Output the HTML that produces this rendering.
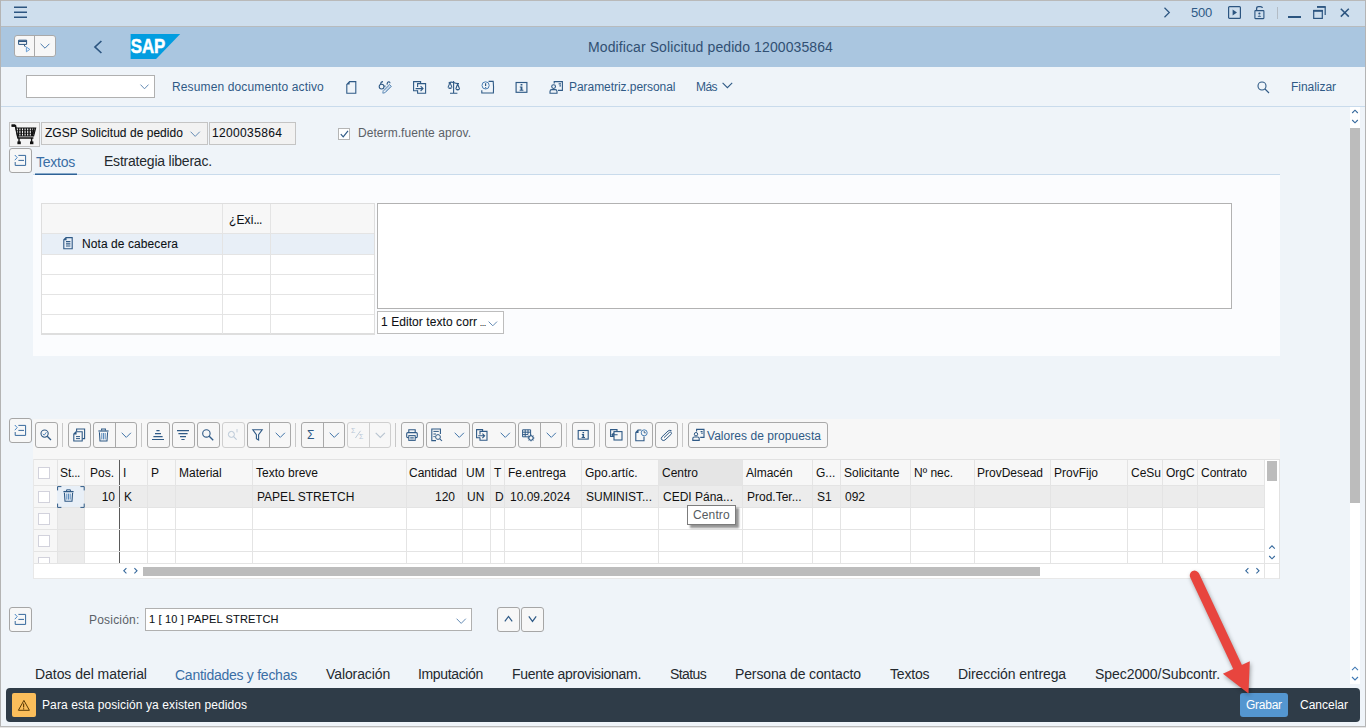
<!DOCTYPE html>
<html lang="es">
<head>
<meta charset="utf-8">
<title>Modificar Solicitud pedido 1200035864</title>
<style>
*{box-sizing:border-box;margin:0;padding:0}
html,body{width:1366px;height:728px;overflow:hidden;background:#eff4f9}
body{font-family:"Liberation Sans",sans-serif;font-size:13px;color:#24292e;position:relative}
.a{position:absolute}
.t{position:absolute;white-space:nowrap;line-height:16px;height:16px}
svg{position:absolute;overflow:visible}
#titlebar{left:0;top:0;width:1366px;height:26px;background:#cedeed}
#tsep{left:0;top:26px;width:1366px;height:1px;background:#b7bbbe}
#header{left:0;top:27px;width:1366px;height:40px;background:#aac6e0}
#toolbar{left:0;top:67px;width:1366px;height:39px;background:#eff4f9}
#tbline{left:0;top:106px;width:1366px;height:1px;background:#c9dbec}
.bl{color:#2f5a86}
.btn{position:absolute;background:#fafafa;border:1px solid #ababab;border-radius:3px}
.fld{position:absolute;background:#fff;border:1px solid #b3b3b3}
.ro{background:#f2f2f2;border-color:#c4c4c4}
.sep{position:absolute;width:1px;background:#c8c8c8}
.ic{stroke:#2f5a86;fill:none;stroke-width:1.1}
.f12{font-size:12px;letter-spacing:.13px}
.chev{stroke:#658cb5;fill:none;stroke-width:1}
.dk{color:#0d1116;-webkit-text-stroke:.08px #0d1116}
.tab{font-size:14px}
.cbtn{position:absolute;background:#f7f7f7;border:1px solid #a6a6a6;border-radius:3px}
.gl{position:absolute;background:#e4e4e4}
.g{font-size:12px;color:#111}
</style>
</head>
<body>
<!-- window chrome -->
<div class="a" id="titlebar"></div>
<div class="a" id="tsep"></div>
<div class="a" id="header"></div>
<div class="a" id="toolbar"></div>
<div class="a" id="tbline"></div>

<!-- title bar -->
<svg class="a" style="left:14px;top:5px" width="14" height="14" viewBox="0 0 14 14"><path d="M0 2.2H13M0 7.2H13M0 12.2H13" stroke="#2c5580" stroke-width="1.4" fill="none"/></svg>
<svg class="a" style="left:1163px;top:7px" width="8" height="11" viewBox="0 0 8 11"><path d="M1.5 0.8L6.3 5.5L1.5 10.2" stroke="#2c5580" stroke-width="1.2" fill="none"/></svg>
<div class="t bl" style="left:1191px;top:5px;font-size:13px;letter-spacing:-.2px">500</div>
<svg class="a" style="left:1228px;top:6px" width="13" height="13" viewBox="0 0 13 13"><rect x=".6" y=".6" width="11.8" height="11.8" rx="1" stroke="#2c5580" stroke-width="1.2" fill="none"/><path d="M4.6 3.6L9 6.5L4.6 9.4Z" fill="#2c5580"/></svg>
<svg class="a" style="left:1254px;top:5px" width="11" height="14" viewBox="0 0 11 14"><path d="M2.6 5.6V3.4Q2.6 1.6 4.6 1.6H6.4Q8.2 1.6 8.4 3" stroke="#2c5580" stroke-width="1.3" fill="none"/><rect x=".9" y="5.6" width="9" height="8" rx=".6" stroke="#2c5580" stroke-width="1.1" fill="none"/><path d="M5.4 7.4a1.1 1.1 0 1 1 0 2.2a1.1 1.1 0 1 1 0-2.2M3.6 11.8Q5.4 9.2 7.2 11.8Z" fill="#2c5580"/></svg>
<div class="a" style="left:1277px;top:7px;width:1px;height:12px;background:#b3bcc5"></div>
<div class="a" style="left:1288px;top:16px;width:13px;height:2px;background:#2c5580"></div>
<svg class="a" style="left:1313px;top:6px" width="13" height="13" viewBox="0 0 13 13"><path d="M4 1H12.2V9" stroke="#2c5580" stroke-width="1.2" fill="none"/><path d="M4 .9H12.6" stroke="#2c5580" stroke-width="1.7"/><rect x=".7" y="4.6" width="8.6" height="7.8" stroke="#2c5580" stroke-width="1.2" fill="none"/><path d="M.2 4.8H9.8" stroke="#2c5580" stroke-width="1.9"/></svg>
<svg class="a" style="left:1340px;top:8px" width="10" height="10" viewBox="0 0 10 10"><path d="M.8 .8L8.8 8.6M8.8 .8L.8 8.6" stroke="#2c5580" stroke-width="1.5" fill="none"/></svg>

<!-- header -->
<div class="btn" style="left:14px;top:35px;width:42px;height:22px;border-color:#a9a9a9;background:#f7f7f7"></div>
<div class="a" style="left:34px;top:36px;width:1px;height:20px;background:#a9a9a9"></div>
<svg class="a" style="left:18px;top:39px" width="13" height="14" viewBox="0 0 13 14"><path d="M.6 1.2H8.6V5.4H.6Z" stroke="#2c5580" stroke-width="1" fill="none"/><path d="M.6 2.3H8.6" stroke="#2c5580" stroke-width="1.5"/><path d="M6 5.6L7.4 8" stroke="#2c5580" stroke-width="1"/><path d="M8.4 8L11.8 10.4L8.4 12.8Z" stroke="#5a95d0" stroke-width=".9" fill="#eef4fb"/></svg>
<svg class="a" style="left:40px;top:43px" width="10" height="7" viewBox="0 0 10 7"><path d="M.6 .8L5 5.2L9.4 .8" stroke="#3f73a8" stroke-width=".95" fill="none"/></svg>
<svg class="a" style="left:93px;top:40px" width="10" height="14" viewBox="0 0 10 14"><path d="M8.4 1L2 7L8.4 13" stroke="#2c5580" stroke-width="1.7" fill="none"/></svg>
<svg class="a" style="left:130px;top:34px" width="51" height="25" viewBox="0 0 51 25"><path d="M.6 0H50.2L26.1 25H.6Z" fill="#029de0"/><text x=".7" y="18.8" font-family="Liberation Sans,sans-serif" font-weight="bold" font-size="20.4" fill="#fff" stroke="#fff" stroke-width=".5" textLength="34.6" lengthAdjust="spacingAndGlyphs">SAP</text></svg>
<div class="t" style="left:588px;top:39px;font-size:14px;letter-spacing:.1px;color:#315073">Modificar Solicitud pedido 1200035864</div>

<!-- toolbar -->
<div class="fld" style="left:26px;top:75px;width:129px;height:23px;border-color:#b0b0b0"></div>
<svg style="left:140px;top:84px" width="9" height="6" viewBox="0 0 9 6"><path class="chev" d="M.5 .6L4.5 4.8L8.5 .6"/></svg>
<div class="t bl f12" style="left:172px;top:79px">Resumen documento activo</div>
<svg style="left:346px;top:81px" width="11" height="13" viewBox="0 0 11 13"><path class="ic" d="M3.6 .6H9.8V12.2H.8V3.4Z"/><path d="M.8 3.4L3.6 .6V3.4Z" fill="#2f5a86"/></svg>
<svg style="left:378px;top:80px" width="15" height="14" viewBox="0 0 15 14"><circle class="ic" cx="3.6" cy="6.6" r="2.4" stroke-width="1"/><path class="ic" stroke-width=".9" d="M2.6 4.4Q2.8 1.6 5 1.6M6 6.4Q6.8 5.8 7.6 6.2M9 4.6Q9.4 1.6 11 1.8Q12 2.2 12 3.2"/><path d="M11.4 4.4L13.4 6.4L7.2 12.6L4.8 13.2L5.2 10.6Z" stroke="#3f73a8" stroke-width=".8" fill="none"/><path d="M6.4 10.8L11.8 5.4M7.4 11.6L12.6 6.2" stroke="#6f9ac6" stroke-width=".7"/></svg>
<svg style="left:413px;top:81px" width="14" height="13" viewBox="0 0 14 13"><path class="ic" d="M4.6 9.8H.6V.6H7.6V2.4"/><path class="ic" d="M4.6 6V2.6H12.6V12.2H4.6V9.2"/><path class="ic" d="M2.6 7.6H10M7.6 5.2L10 7.6L7.6 10"/></svg>
<svg style="left:447px;top:80px" width="14" height="14" viewBox="0 0 14 14"><path class="ic" stroke-width="1.3" d="M6.6 1V13M3 13.2H10.4"/><path class="ic" stroke-width="1" d="M1.6 3.2Q4 1.4 6.6 2.6Q9 3.8 12 3.6"/><path class="ic" stroke-width=".9" d="M3 2.6L1 7.4M3 2.6L5 7.4M10.6 4L8.8 9M10.6 4L12.6 9"/><path d="M.6 7.4H5.4Q3 10.4 .6 7.4ZM8.4 9H13Q10.6 12 8.4 9Z" fill="#2f5a86"/></svg>
<svg style="left:480px;top:80px" width="15" height="14" viewBox="0 0 15 14"><circle cx="5.6" cy="5.4" r="3.6" stroke="#4a7fb5" stroke-width="1" fill="none"/><path d="M5.6 3.2V6M5.6 7.2V8.2" stroke="#2f5a86" stroke-width="1.2"/><path class="ic" d="M8.6 1.4H13.2Q13.8 7 13.4 13H1.8V10.2"/></svg>
<svg style="left:515px;top:81px" width="13" height="12" viewBox="0 0 13 12"><rect x="1.1" y="1.5" width="10.8" height="9.8" stroke="#2f5a86" stroke-width="1.15" fill="none"/><path d="M5.6 3H7.4V4.6H5.6ZM4.8 5.5H7.4V8.8H8.4V9.8H4.6V8.8H5.6V6.5H4.8Z" fill="#2f5a86"/></svg>
<svg style="left:549px;top:80px" width="15" height="14" viewBox="0 0 15 14"><path class="ic" d="M5.2 3.6V1.6H13.4V10.4H9"/><path d="M9.6 3.8H12M10.4 5.8H12" stroke="#2f5a86" stroke-width="1.2"/><circle class="ic" cx="4.6" cy="6.6" r="1.9" stroke-width="1.1"/><path class="ic" stroke-width="1.1" d="M1 13.2V11.4Q1 9.6 2.8 9.6H6.2Q8 9.6 8 11.4V13.2Z"/></svg>
<div class="t bl f12" style="left:569px;top:79px;letter-spacing:-0.05px">Parametriz.personal</div>
<div class="t bl f12" style="left:696px;top:79px;letter-spacing:-0.55px">Más</div>
<svg style="left:722px;top:82px" width="11" height="7" viewBox="0 0 11 7"><path class="ic" stroke-width="1.1" d="M.6 .8L5.4 5.6L10.2 .8"/></svg>
<svg style="left:1257px;top:81px" width="13" height="13" viewBox="0 0 13 13"><circle class="ic" cx="5" cy="5" r="4" stroke-width="1.2"/><path class="ic" stroke-width="1.5" d="M8 8L12 12"/></svg>
<div class="t bl f12" style="left:1291px;top:79px;letter-spacing:-0.04px">Finalizar</div>

<!-- doc header row -->
<div class="a" style="left:9px;top:122px;width:31px;height:25px;background:#f4f4f4;border:1px solid #c2c2c2"></div>
<svg style="left:11px;top:124px" width="26" height="21" viewBox="0 0 26 21"><path d="M1 1.6H4.4L7 14H22.4" stroke="#111" stroke-width="1.6" fill="none"/><path d="M5 4H24.6L22.6 12H6.6Z" fill="#fff" stroke="#111" stroke-width="1.2"/><path d="M7.6 4V12M10.2 4V12M12.8 4V12M15.4 4V12M18 4V12M20.6 4V12M23 4L21.4 12" stroke="#111" stroke-width="1.5"/><path d="M5.6 6.6H24M6.2 9.4H23.4" stroke="#111" stroke-width=".7"/><rect x=".4" y=".4" width="3.6" height="2.4" fill="#111"/><path d="M8 14V18.4M20.6 14V18.4" stroke="#111" stroke-width="1.4"/><rect x="6.4" y="17.4" width="3.4" height="2.8" fill="#111"/><rect x="19" y="17.4" width="3.4" height="2.8" fill="#111"/></svg>
<div class="fld ro" style="left:41px;top:122px;width:167px;height:23px"></div>
<div class="t dk f12" style="left:45px;top:125px;letter-spacing:0.03px">ZGSP Solicitud de pedido</div>
<svg style="left:190px;top:131px" width="11" height="7" viewBox="0 0 11 7"><path class="chev" d="M.6 .7L5.2 5.4L9.8 .7"/></svg>
<div class="fld ro" style="left:209px;top:122px;width:87px;height:23px"></div>
<div class="t dk f12" style="left:212px;top:125px;letter-spacing:.35px">1200035864</div>
<div class="a" style="left:338px;top:128px;width:12px;height:12px;background:#fff;border:1px solid #b5b5b5"></div>
<svg style="left:340px;top:130px" width="9" height="8" viewBox="0 0 9 8"><path d="M.8 4.2L3.2 6.8L8 .8" stroke="#2f5a86" stroke-width="1.2" fill="none"/></svg>
<div class="t f12" style="left:358px;top:125px;color:#5b6167;letter-spacing:0.06px">Determ.fuente aprov.</div>
<!-- header tabs -->
<div class="cbtn" style="left:9px;top:148px;width:23px;height:25px"></div>
<svg style="left:14px;top:154px" width="13" height="12" viewBox="0 0 13 12"><path d="M.8 1L3.2 3.6L.8 6.2" stroke="#4a86c4" stroke-width="1" fill="none"/><path d="M4.4 1.4H11.6V11.4H1.2V8M4.4 6.4H10" stroke="#37699c" stroke-width="1" fill="none"/></svg>
<div class="t tab" style="left:36px;top:154px;color:#3a6ea5;letter-spacing:-.24px">Textos</div>
<div class="t tab" style="left:104px;top:153px;color:#24292e;letter-spacing:-.22px">Estrategia liberac.</div>
<div class="a" style="left:33px;top:174px;width:1247px;height:1px;background:#c9dbec"></div>
<div class="a" style="left:35px;top:173px;width:42px;height:1px;background:#86a8c9"></div><div class="a" style="left:35px;top:174px;width:42px;height:1px;background:#2f6296"></div>
<div class="a" style="left:33px;top:175px;width:1247px;height:181px;background:#fbfcfe"></div>

<!-- text panel -->
<div class="a" style="left:41px;top:203px;width:334px;height:132px;background:#fff;border:1px solid #dedede;border-bottom:2px solid #dedede"></div>
<div class="a" style="left:42px;top:204px;width:332px;height:29px;background:#f7f7f7"></div>
<div class="a" style="left:42px;top:234px;width:332px;height:20px;background:#e8eff7"></div>
<div class="gl" style="left:42px;top:233px;width:332px;height:1px"></div>
<div class="gl" style="left:42px;top:254px;width:332px;height:1px"></div>
<div class="gl" style="left:42px;top:274px;width:332px;height:1px"></div>
<div class="gl" style="left:42px;top:294px;width:332px;height:1px"></div>
<div class="gl" style="left:42px;top:314px;width:332px;height:1px"></div>
<div class="gl" style="left:222px;top:204px;width:1px;height:130px"></div>
<div class="gl" style="left:270px;top:204px;width:1px;height:130px"></div>
<div class="t dk f12" style="left:229px;top:212px">¿Exi<span style="letter-spacing:-.6px">...</span></div>
<svg style="left:63px;top:237px" width="10" height="13" viewBox="0 0 10 13"><path class="ic" stroke-width="1" d="M3 .6H9.2V11.8H.8V2.8ZM3 .6V2.8H.8"/><path d="M3 4.6H7.4M3 6.8H7.4M3 9H7.4" stroke="#2f5a86" stroke-width="1.2"/></svg>
<div class="t dk f12" style="left:82px;top:236px;letter-spacing:0.08px">Nota de cabecera</div>
<div class="fld" style="left:377px;top:203px;width:855px;height:106px;border-color:#b2b2b2"></div>
<div class="fld" style="left:377px;top:311px;width:127px;height:23px;border-color:#bdbdbd"></div>
<div class="t dk f12" style="left:381px;top:314px;letter-spacing:.07px">1 Editor texto corr<span style="letter-spacing:-.5px;font-size:9px;margin-left:2.6px">...</span></div>
<svg style="left:488px;top:321px" width="10" height="6" viewBox="0 0 10 6"><path class="chev" d="M.6 .6L4.8 4.8L9 .6"/></svg>

<!--ALVSTART-->
<!-- ALV grid -->
<div class="cbtn" style="left:9px;top:418px;width:23px;height:25px"></div>
<svg style="left:14px;top:424px" width="13" height="12" viewBox="0 0 13 12"><path d="M.8 1L3.2 3.6L.8 6.2" stroke="#4a86c4" stroke-width="1" fill="none"/><path d="M4.4 1.4H11.6V11.4H1.2V8M4.4 6.4H10" stroke="#37699c" stroke-width="1" fill="none"/></svg>
<div class="a" style="left:33px;top:419px;width:1247px;height:40px;background:#f7f7f7"></div>
<div class="cbtn" style="left:35px;top:422px;width:23px;height:26px;border-color:#a9a9a9"></div>
<div class="cbtn" style="left:68px;top:422px;width:23px;height:26px;border-color:#a9a9a9"></div>
<div class="cbtn" style="left:93px;top:422px;width:44px;height:26px;border-color:#a9a9a9"></div>
<div class="a" style="left:115px;top:423px;width:1px;height:24px;background:#a9a9a9"></div>
<div class="cbtn" style="left:147px;top:422px;width:23px;height:26px;border-color:#a9a9a9"></div>
<div class="cbtn" style="left:172px;top:422px;width:23px;height:26px;border-color:#a9a9a9"></div>
<div class="cbtn" style="left:197px;top:422px;width:23px;height:26px;border-color:#a9a9a9"></div>
<div class="cbtn" style="left:222px;top:422px;width:23px;height:26px;border-color:#cfcfcf"></div>
<div class="cbtn" style="left:247px;top:422px;width:44px;height:26px;border-color:#a9a9a9"></div>
<div class="a" style="left:269px;top:423px;width:1px;height:24px;background:#a9a9a9"></div>
<div class="cbtn" style="left:301px;top:422px;width:44px;height:26px;border-color:#a9a9a9"></div>
<div class="a" style="left:323px;top:423px;width:1px;height:24px;background:#a9a9a9"></div>
<div class="cbtn" style="left:347px;top:422px;width:44px;height:26px;border-color:#cfcfcf"></div>
<div class="a" style="left:369px;top:423px;width:1px;height:24px;background:#cfcfcf"></div>
<div class="cbtn" style="left:401px;top:422px;width:23px;height:26px;border-color:#a9a9a9"></div>
<div class="cbtn" style="left:426px;top:422px;width:44px;height:26px;border-color:#a9a9a9"></div>
<div class="cbtn" style="left:472px;top:422px;width:44px;height:26px;border-color:#a9a9a9"></div>
<div class="cbtn" style="left:518px;top:422px;width:44px;height:26px;border-color:#a9a9a9"></div>
<div class="a" style="left:540px;top:423px;width:1px;height:24px;background:#a9a9a9"></div>
<div class="cbtn" style="left:572px;top:422px;width:23px;height:26px;border-color:#a9a9a9"></div>
<div class="cbtn" style="left:605px;top:422px;width:23px;height:26px;border-color:#a9a9a9"></div>
<div class="cbtn" style="left:630px;top:422px;width:23px;height:26px;border-color:#a9a9a9"></div>
<div class="cbtn" style="left:655px;top:422px;width:23px;height:26px;border-color:#a9a9a9"></div>
<div class="cbtn" style="left:688px;top:422px;width:140px;height:26px;border-color:#a9a9a9"></div>
<div class="sep" style="left:62px;top:423px;height:24px"></div>
<div class="sep" style="left:141px;top:423px;height:24px"></div>
<div class="sep" style="left:295px;top:423px;height:24px"></div>
<div class="sep" style="left:395px;top:423px;height:24px"></div>
<div class="sep" style="left:566px;top:423px;height:24px"></div>
<div class="sep" style="left:599px;top:423px;height:24px"></div>
<div class="sep" style="left:682px;top:423px;height:24px"></div>
<svg style="left:121px;top:432px" width="11" height="7" viewBox="0 0 11 7"><path d="M.7 .8L5.3 5.4L9.9 .8" stroke="#3f73a8" stroke-width="1" fill="none"/></svg>
<svg style="left:275px;top:432px" width="11" height="7" viewBox="0 0 11 7"><path d="M.7 .8L5.3 5.4L9.9 .8" stroke="#3f73a8" stroke-width="1" fill="none"/></svg>
<svg style="left:329px;top:432px" width="11" height="7" viewBox="0 0 11 7"><path d="M.7 .8L5.3 5.4L9.9 .8" stroke="#3f73a8" stroke-width="1" fill="none"/></svg>
<svg style="left:375px;top:432px" width="11" height="7" viewBox="0 0 11 7"><path d="M.7 .8L5.3 5.4L9.9 .8" stroke="#b8c4d0" stroke-width="1.1" fill="none"/></svg>
<svg style="left:454px;top:432px" width="11" height="7" viewBox="0 0 11 7"><path d="M.7 .8L5.3 5.4L9.9 .8" stroke="#3f73a8" stroke-width="1" fill="none"/></svg>
<svg style="left:500px;top:432px" width="11" height="7" viewBox="0 0 11 7"><path d="M.7 .8L5.3 5.4L9.9 .8" stroke="#3f73a8" stroke-width="1" fill="none"/></svg>
<svg style="left:546px;top:432px" width="11" height="7" viewBox="0 0 11 7"><path d="M.7 .8L5.3 5.4L9.9 .8" stroke="#3f73a8" stroke-width="1" fill="none"/></svg>
<svg style="left:40px;top:429px" width="12" height="12" viewBox="0 0 12 12"><circle cx="4.6" cy="4.6" r="3.6" stroke="#2f5a86" stroke-width="1.1" fill="none"/><path d="M7.2 7.2L11 11" stroke="#2f5a86" stroke-width="1.3"/><path d="M2.8 4.8L4.2 6.2L6.4 3.2" stroke="#4a7fb5" stroke-width=".9" fill="none"/></svg>
<svg style="left:73px;top:428px" width="13" height="14" viewBox="0 0 13 14"><path class="ic" stroke-width="1.1" d="M3.6 3.6V1H11.6V10.6H9.4"/><path class="ic" stroke-width="1.1" d="M3 3.8H9.2V13H.8V6ZM3 3.8V6H.8"/><path d="M3 8.6H7M3 10.6H7" stroke="#2f5a86" stroke-width="1"/></svg>
<svg style="left:98px;top:428px" width="11" height="14" viewBox="0 0 11 14"><path d="M.4 3H10.6" stroke="#2f5a86" stroke-width="1.2"/><path d="M3.6 2.4V1H7.4V2.4" stroke="#2f5a86" stroke-width="1.1" fill="none"/><path d="M1.4 4.2L2 13H9L9.6 4.2" stroke="#2f5a86" stroke-width="1.05" fill="none"/><path d="M3.8 5V11.4M5.5 5V11.4M7.2 5V11.4" stroke="#4a7fb5" stroke-width=".9"/></svg>
<svg style="left:151px;top:429px" width="14" height="12" viewBox="0 0 14 12"><path d="M5.4 1.6H8.6M4 4.6H10M2.4 7.6H11.6M1 10.4H13" stroke="#2f5a86" stroke-width="1.05"/></svg>
<svg style="left:176px;top:429px" width="14" height="12" viewBox="0 0 14 12"><path d="M1 1.6H13M2.4 4.6H11.6M4 7.6H10M5.4 10.4H8.6" stroke="#2f5a86" stroke-width="1.05"/></svg>
<svg style="left:201px;top:428px" width="14" height="14" viewBox="0 0 14 14"><circle cx="5.4" cy="5.4" r="3.7" stroke="#2f5a86" stroke-width="1.1" fill="none"/><path d="M8.2 8.2L12.2 12.2" stroke="#2f5a86" stroke-width="1.3"/></svg>
<svg style="left:227px;top:428px" width="13" height="13" viewBox="0 0 13 13"><circle cx="4.4" cy="6.4" r="3" stroke="#b8c7d6" stroke-width="1" fill="none"/><path d="M6.6 8.6L9.6 11.6" stroke="#b8c7d6" stroke-width="1.05"/><path d="M10 1V4.4" stroke="#c5d0dc" stroke-width="1"/></svg>
<svg style="left:252px;top:429px" width="11" height="12" viewBox="0 0 11 12"><path d="M.8 .8H10.2L6.6 5.8V11L4.4 9.6V5.8Z" stroke="#2f5a86" stroke-width="1.1" fill="none"/></svg>
<div class="t" style="left:307px;top:427px;font-size:12px;color:#2f5a86">&Sigma;</div>
<div class="t" style="left:351px;top:423px;font-size:7px;color:#b8c7d6">&Sigma;</div><div class="t" style="left:359px;top:429px;font-size:7px;color:#b8c7d6">&Sigma;</div>
<svg style="left:354px;top:430px" width="8" height="9" viewBox="0 0 8 9"><path d="M6.6 .8L1.4 8" stroke="#b8c7d6" stroke-width=".9"/></svg>
<svg style="left:406px;top:429px" width="12" height="12" viewBox="0 0 12 12"><path class="ic" stroke-width="1" d="M2.8 3.6V.8H9.2V3.6"/><rect x=".7" y="3.6" width="10.6" height="5" rx="1.1" stroke="#2f5a86" stroke-width="1.1" fill="none"/><rect x="2.8" y="6.6" width="6.4" height="4.8" stroke="#2f5a86" stroke-width="1" fill="#f7f7f7"/><path d="M4.2 8.4H7.8M4.2 9.9H7.8" stroke="#2f5a86" stroke-width=".8"/></svg>
<svg style="left:431px;top:428px" width="12" height="14" viewBox="0 0 12 14"><path class="ic" stroke-width="1.1" d="M9.4 6V1H.8V12.6H5"/><path d="M2.4 3.4H7.8M2.4 6H5" stroke="#2f5a86" stroke-width="1"/><circle cx="7" cy="9" r="2.4" stroke="#2f5a86" stroke-width="1" fill="none"/><path d="M8.8 10.8L11 13" stroke="#2f5a86" stroke-width="1.05"/><path d="M2.4 8.6H3.8" stroke="#2f5a86" stroke-width="1"/></svg>
<svg style="left:476px;top:429px" width="12" height="12" viewBox="0 0 12 12"><path class="ic" stroke-width="1.1" d="M4 8.8H.6V.6H6.6V2.2"/><path class="ic" stroke-width="1.1" d="M4 5.4V2.4H11V11.2H4V8.4"/><path class="ic" stroke-width="1.1" d="M2.2 6.8H8.6M6.4 4.6L8.6 6.8L6.4 9"/></svg>
<svg style="left:522px;top:429px" width="13" height="13" viewBox="0 0 13 13"><path d="M.6 .8H8.6V7.8H.6ZM.6 3.2H8.6M.6 5.6H6M3.2 .8V7.8M6 .8V5.4" stroke="#2f5a86" stroke-width="1" fill="none"/><circle cx="9" cy="9" r="2.2" stroke="#2f5a86" stroke-width="1.1" fill="#f7f7f7"/><path d="M9 5.6V6.8M9 11.2V12.4M5.6 9H6.8M11.2 9H12.4M6.6 6.6L7.4 7.4M10.6 10.6L11.4 11.4M11.4 6.6L10.6 7.4M7.4 10.6L6.6 11.4" stroke="#2f5a86" stroke-width=".9"/></svg>
<svg style="left:577px;top:429px" width="13" height="12" viewBox="0 0 13 12"><rect x="1.2" y="1.5" width="10" height="8.6" stroke="#2f5a86" stroke-width="1.1" fill="none"/><path d="M5.5 2.9H7.1V4.3H5.5ZM4.8 5.1H7.1V8H8V8.9H4.6V8H5.5V6H4.8Z" fill="#2f5a86"/></svg>
<svg style="left:610px;top:429px" width="13" height="12" viewBox="0 0 13 12"><path class="ic" stroke-width="1.1" d="M4 7.4H.6V.6H7V2.6"/><rect x="4" y="2.6" width="8" height="8.4" stroke="#2f5a86" stroke-width="1.1" fill="none"/><path class="ic" stroke-width="1" d="M2 5.8H7.6M3.8 4L2 5.8L3.8 7.6"/></svg>
<svg style="left:635px;top:428px" width="13" height="14" viewBox="0 0 13 14"><path class="ic" stroke-width="1.1" d="M6.4 2H3L.8 4.4V12.8H9V8.6M3 2V4.4H.8"/><circle cx="9.2" cy="4.8" r="3" stroke="#4a7fb5" stroke-width="1" fill="none"/><path d="M9.2 3V4.8H10.8" stroke="#2f5a86" stroke-width=".9" fill="none"/></svg>
<svg style="left:660px;top:429px" width="13" height="12" viewBox="0 0 13 12"><path d="M4 8.6L9.4 3.4Q10.4 2.6 11.2 3.4Q12 4.4 11 5.4L5 11Q3.2 12.2 1.8 10.8Q.6 9.4 2 7.8L8 2Q9.8 .6 11.6 1.8" stroke="#2f5a86" stroke-width="1" fill="none"/></svg>
<svg style="left:692px;top:428px" width="13" height="13" viewBox="0 0 13 13"><path class="ic" stroke-width="1.1" d="M4.6 3.4V1.4H12V9.4H8.2"/><path d="M8.6 3.6H10.6M9.4 5.4H10.6" stroke="#2f5a86" stroke-width="1.1"/><circle cx="4" cy="6.2" r="1.7" stroke="#2f5a86" stroke-width="1" fill="none"/><path class="ic" stroke-width="1" d="M.8 12.4V10.6Q.8 9 2.4 9H5.6Q7.2 9 7.2 10.6V12.4Z"/></svg>
<div class="t bl f12" style="left:707px;top:428px;letter-spacing:0.04px">Valores de propuesta</div>
<div class="a" style="left:33px;top:459px;width:1247px;height:119px;background:#fff"></div>
<div class="a" style="left:33px;top:459px;width:1247px;height:1px;background:#e2e2e2"></div>
<div class="a" style="left:33px;top:460px;width:1231px;height:25px;background:#f7f7f7"></div>
<div class="a" style="left:33px;top:485px;width:1231px;height:22px;background:#ececec"></div>
<div class="a" style="left:57px;top:507px;width:27px;height:56px;background:#ececec"></div>
<div class="a" style="left:33px;top:485px;width:24px;height:78px;background:#f7f7f7"></div>
<div class="a" style="left:658px;top:460px;width:84px;height:25px;background:#e5e5e5"></div>
<div class="gl" style="left:57px;top:460px;width:1px;height:103px"></div>
<div class="gl" style="left:84px;top:460px;width:1px;height:103px"></div>
<div class="a" style="left:119px;top:460px;width:1px;height:103px;background:#5a5a5a"></div>
<div class="gl" style="left:147px;top:460px;width:1px;height:103px"></div>
<div class="gl" style="left:175px;top:460px;width:1px;height:103px"></div>
<div class="gl" style="left:252px;top:460px;width:1px;height:103px"></div>
<div class="gl" style="left:406px;top:460px;width:1px;height:103px"></div>
<div class="gl" style="left:462px;top:460px;width:1px;height:103px"></div>
<div class="gl" style="left:490px;top:460px;width:1px;height:103px"></div>
<div class="gl" style="left:504px;top:460px;width:1px;height:103px"></div>
<div class="gl" style="left:581px;top:460px;width:1px;height:103px"></div>
<div class="gl" style="left:658px;top:460px;width:1px;height:103px"></div>
<div class="gl" style="left:742px;top:460px;width:1px;height:103px"></div>
<div class="gl" style="left:812px;top:460px;width:1px;height:103px"></div>
<div class="gl" style="left:840px;top:460px;width:1px;height:103px"></div>
<div class="gl" style="left:910px;top:460px;width:1px;height:103px"></div>
<div class="gl" style="left:974px;top:460px;width:1px;height:103px"></div>
<div class="gl" style="left:1050px;top:460px;width:1px;height:103px"></div>
<div class="gl" style="left:1127px;top:460px;width:1px;height:103px"></div>
<div class="gl" style="left:1162px;top:460px;width:1px;height:103px"></div>
<div class="gl" style="left:1197px;top:460px;width:1px;height:103px"></div>
<div class="gl" style="left:1264px;top:460px;width:1px;height:103px"></div>
<div class="gl" style="left:33px;top:485px;width:1231px;height:1px"></div>
<div class="gl" style="left:33px;top:507px;width:1231px;height:1px"></div>
<div class="gl" style="left:33px;top:529px;width:1231px;height:1px"></div>
<div class="gl" style="left:33px;top:551px;width:1231px;height:1px"></div>
<div class="gl" style="left:33px;top:563px;width:1247px;height:1px"></div>
<div class="a" style="left:33px;top:578px;width:1247px;height:1px;background:#e8e8e8"></div>
<div class="a" style="left:1279px;top:459px;width:1px;height:120px;background:#e2e2e2"></div>
<div class="a" style="left:33px;top:459px;width:1px;height:120px;background:#e8e8e8"></div>
<div class="a" style="left:38px;top:467px;width:12px;height:12px;background:#fff;border:1px solid #d2d2dc"></div>
<div class="a" style="left:38px;top:491px;width:12px;height:12px;background:#fff;border:1px solid #d2d2dc"></div>
<div class="a" style="left:38px;top:513px;width:12px;height:12px;background:#fff;border:1px solid #d2d2dc"></div>
<div class="a" style="left:38px;top:535px;width:12px;height:12px;background:#fff;border:1px solid #d2d2dc"></div>
<div class="a" style="left:38px;top:557px;width:12px;height:6px;background:#fff;border:1px solid #d2d2dc;border-bottom:0"></div>
<div class="t g" style="left:60px;top:465px">St<span style="letter-spacing:-.5px">...</span></div>
<div class="t g" style="left:90px;top:465px">Pos.</div>
<div class="t g" style="left:123px;top:465px">I</div>
<div class="t g" style="left:151px;top:465px">P</div>
<div class="t g" style="left:179px;top:465px">Material</div>
<div class="t g" style="left:256px;top:465px">Texto breve</div>
<div class="t g" style="left:409px;top:465px">Cantidad</div>
<div class="t g" style="left:466px;top:465px">UM</div>
<div class="t g" style="left:494px;top:465px">T</div>
<div class="t g" style="left:508px;top:465px">Fe.entrega</div>
<div class="t g" style="left:585px;top:465px">Gpo.artíc.</div>
<div class="t g" style="left:662px;top:465px">Centro</div>
<div class="t g" style="left:746px;top:465px">Almacén</div>
<div class="t g" style="left:816px;top:465px">G...</div>
<div class="t g" style="left:844px;top:465px">Solicitante</div>
<div class="t g" style="left:914px;top:465px">Nº nec.</div>
<div class="t g" style="left:977px;top:465px">ProvDesead</div>
<div class="t g" style="left:1054px;top:465px">ProvFijo</div>
<div class="t g" style="left:1131px;top:465px">CeSu</div>
<div class="t g" style="left:1166px;top:465px">OrgC</div>
<div class="t g" style="left:1201px;top:465px">Contrato</div>
<div class="t g" style="left:124px;top:489px">K</div>
<div class="t g" style="left:257px;top:489px">PAPEL STRETCH</div>
<div class="t g" style="left:467px;top:489px">UN</div>
<div class="t g" style="left:495px;top:489px">D</div>
<div class="t g" style="left:510px;top:489px">10.09.2024</div>
<div class="t g" style="left:586px;top:489px">SUMINIST...</div>
<div class="t g" style="left:663px;top:489px">CEDI Pána...</div>
<div class="t g" style="left:747px;top:489px">Prod.Ter...</div>
<div class="t g" style="left:817px;top:489px">S1</div>
<div class="t g" style="left:845px;top:489px">092</div>
<div class="t g" style="left:84px;top:489px;width:31px;text-align:right">10</div>
<div class="t g" style="left:406px;top:489px;width:49px;text-align:right">120</div>
<div class="a" style="left:57px;top:486px;width:27px;height:21px;background:#e8eff7"></div>
<svg style="left:57px;top:485px" width="28" height="23" viewBox="0 0 28 23"><path d="M.6 5.4V1.6H4.4M23.4 1.6H27.2V5.4M27.2 18.6V22.4H23.4M4.4 22.4H.6V18.6" stroke="#2f5a86" stroke-width="1" fill="none"/></svg>
<svg style="left:63px;top:489px" width="11" height="13" viewBox="0 0 11 13"><path d="M.4 2.6H10.6" stroke="#2f5a86" stroke-width="1.3"/><path d="M3.6 2V.8H7.4V2" stroke="#2f5a86" stroke-width="1" fill="none"/><path d="M1.4 3.8L2 12.2H9L9.6 3.8" stroke="#2f5a86" stroke-width="1.1" fill="none"/><path d="M3.8 4.6V10.6M5.5 4.6V10.6M7.2 4.6V10.6" stroke="#4a7fb5" stroke-width=".9"/></svg>
<div class="a" style="left:1267px;top:461px;width:10px;height:20px;background:#bcbcbc"></div>
<svg style="left:1268px;top:543px" width="8" height="18" viewBox="0 0 8 18"><path d="M1.2 5.6L4 2.8L6.8 5.6M1.2 13L4 15.8L6.8 13" stroke="#35689c" stroke-width="1.1" fill="none"/></svg>
<div class="gl" style="left:1264px;top:563px;width:1px;height:15px"></div>
<div class="a" style="left:143px;top:567px;width:897px;height:9px;background:#bcbcbc"></div>
<svg style="left:122px;top:566px" width="17" height="9" viewBox="0 0 17 9"><path d="M4.4 2.2L1.8 4.8L4.4 7.4M12.4 2.2L15 4.8L12.4 7.4" stroke="#35689c" stroke-width="1.1" fill="none"/></svg>
<svg style="left:1244px;top:566px" width="17" height="9" viewBox="0 0 17 9"><path d="M4.4 2.2L1.8 4.8L4.4 7.4M12.4 2.2L15 4.8L12.4 7.4" stroke="#35689c" stroke-width="1.1" fill="none"/></svg>
<div class="a" style="left:687px;top:505px;width:49px;height:20px;background:#fff;border:1px solid #7c7c7c;box-shadow:3px 3px 2px rgba(0,0,0,.42)"></div>
<div class="t f12" style="left:693px;top:507px;color:#555b61">Centro</div>
<!--ALVEND-->
<!-- main vertical scrollbar -->
<div class="a" style="left:1350px;top:107px;width:10px;height:577px;background:#fff"></div>
<div class="a" style="left:1350px;top:128px;width:10px;height:375px;background:#bcbcbc"></div>
<svg style="left:1351px;top:107px" width="8" height="20" viewBox="0 0 8 20"><path d="M1.2 6L4 3.2L6.8 6M1.2 13L4 15.8L6.8 13" stroke="#35689c" stroke-width="1.1" fill="none"/></svg>
<svg style="left:1351px;top:663px" width="8" height="20" viewBox="0 0 8 20"><path d="M1 7.2L4 4.2L7 7.2M1 14L4 17L7 14" stroke="#3f78b3" stroke-width="1.1" fill="none"/></svg>
<!-- item detail -->
<div class="cbtn" style="left:9px;top:607px;width:23px;height:25px"></div>
<svg style="left:14px;top:613px" width="13" height="12" viewBox="0 0 13 12"><path d="M.8 1L3.2 3.6L.8 6.2" stroke="#4a86c4" stroke-width="1" fill="none"/><path d="M4.4 1.4H11.6V11.4H1.2V8M4.4 6.4H10" stroke="#37699c" stroke-width="1" fill="none"/></svg>
<div class="t f12" style="left:89px;top:612px;color:#5b6167;letter-spacing:0.2px">Posición:</div>
<div class="fld" style="left:145px;top:608px;width:327px;height:23px;border-color:#b0b0b0"></div>
<div class="t dk" style="left:149px;top:611px;font-size:11px;letter-spacing:.17px">1 [ 10 ] PAPEL STRETCH</div>
<svg style="left:456px;top:618px" width="11" height="7" viewBox="0 0 11 7"><path class="chev" d="M.6 .7L5.2 5.4L9.8 .7"/></svg>
<div class="cbtn" style="left:497px;top:607px;width:23px;height:25px"></div>
<div class="cbtn" style="left:521px;top:607px;width:23px;height:25px"></div>
<svg style="left:504px;top:615px" width="9" height="8" viewBox="0 0 9 8"><path d="M.8 6.4L4.5 1.4L8.2 6.4" stroke="#2f5a86" stroke-width="1.2" fill="none"/></svg>
<svg style="left:528px;top:615px" width="9" height="8" viewBox="0 0 9 8"><path d="M.8 1.4L4.5 6.4L8.2 1.4" stroke="#2f5a86" stroke-width="1.2" fill="none"/></svg>
<!-- item tabs -->
<div class="t tab" style="left:35px;top:666px;letter-spacing:-.05px">Datos del material</div>
<div class="t tab" style="left:175px;top:667px;letter-spacing:-.26px;color:#3a6ea5">Cantidades y fechas</div>
<div class="t tab" style="left:326px;top:666px;letter-spacing:-.1px">Valoración</div>
<div class="t tab" style="left:418px;top:666px;letter-spacing:-0.35px">Imputación</div>
<div class="t tab" style="left:512px;top:666px;letter-spacing:-.28px">Fuente aprovisionam.</div>
<div class="t tab" style="left:670px;top:666px;letter-spacing:-0.57px">Status</div>
<div class="t tab" style="left:735px;top:666px;letter-spacing:-.13px">Persona de contacto</div>
<div class="t tab" style="left:890px;top:666px;letter-spacing:-.2px">Textos</div>
<div class="t tab" style="left:958px;top:666px;letter-spacing:-.1px">Dirección entrega</div>
<div class="t tab" style="left:1095px;top:666px;letter-spacing:-.06px">Spec2000/Subcontr.</div>

<!-- status bar -->
<div class="a" style="left:6px;top:688px;width:1354px;height:34px;background:#2f3c48;border-radius:4px"></div>
<div class="a" style="left:12px;top:693px;width:24px;height:24px;background:#fbbe5b;border-radius:2px"></div>
<svg style="left:17px;top:699px" width="14" height="13" viewBox="0 0 14 13"><path d="M6.9 1.4L12.4 11.3H1.4Z" stroke="#5b3b06" stroke-width="1" fill="none" stroke-linejoin="round"/><path d="M6.6 4.6V8.4M6.6 9.3V10.4" stroke="#6a3f04" stroke-width="1.2"/></svg>
<div class="t f12" style="left:42px;top:697px;color:#fff;letter-spacing:0.1px">Para esta posición ya existen pedidos</div>
<div class="a" style="left:1240px;top:693px;width:48px;height:24px;background:#5496d0;border-radius:3px"></div>
<div class="t f12" style="left:1246px;top:697px;color:#fff;letter-spacing:-.25px">Grabar</div>
<div class="t f12" style="left:1300px;top:697px;color:#fff;letter-spacing:0">Cancelar</div>

<!-- annotation arrow -->
<svg style="left:1170px;top:560px;filter:drop-shadow(1px 2px 2px rgba(0,0,0,.35))" width="110" height="140" viewBox="1170 560 110 140"><path d="M1194.6 575.4L1237.7 667.2" stroke="#e8453e" stroke-width="9.6" stroke-linecap="round" fill="none"/><path d="M1222.9 673.8L1249.8 661.3L1248.5 693.6Z" fill="#e8453e"/></svg>


<!-- window borders -->
<div class="a" style="left:0;top:0;width:1366px;height:1px;background:#b9b9b9"></div>
<div class="a" style="left:0;top:0;width:1px;height:728px;background:#b4b4b4"></div>
<div class="a" style="left:1365px;top:0;width:1px;height:728px;background:#b4b4b4"></div>
<div class="a" style="left:0;top:726px;width:1366px;height:1px;background:#b9b9b9"></div>
<div class="a" style="left:0;top:727px;width:1366px;height:1px;background:#e6e6e6"></div>
</body>
</html>
